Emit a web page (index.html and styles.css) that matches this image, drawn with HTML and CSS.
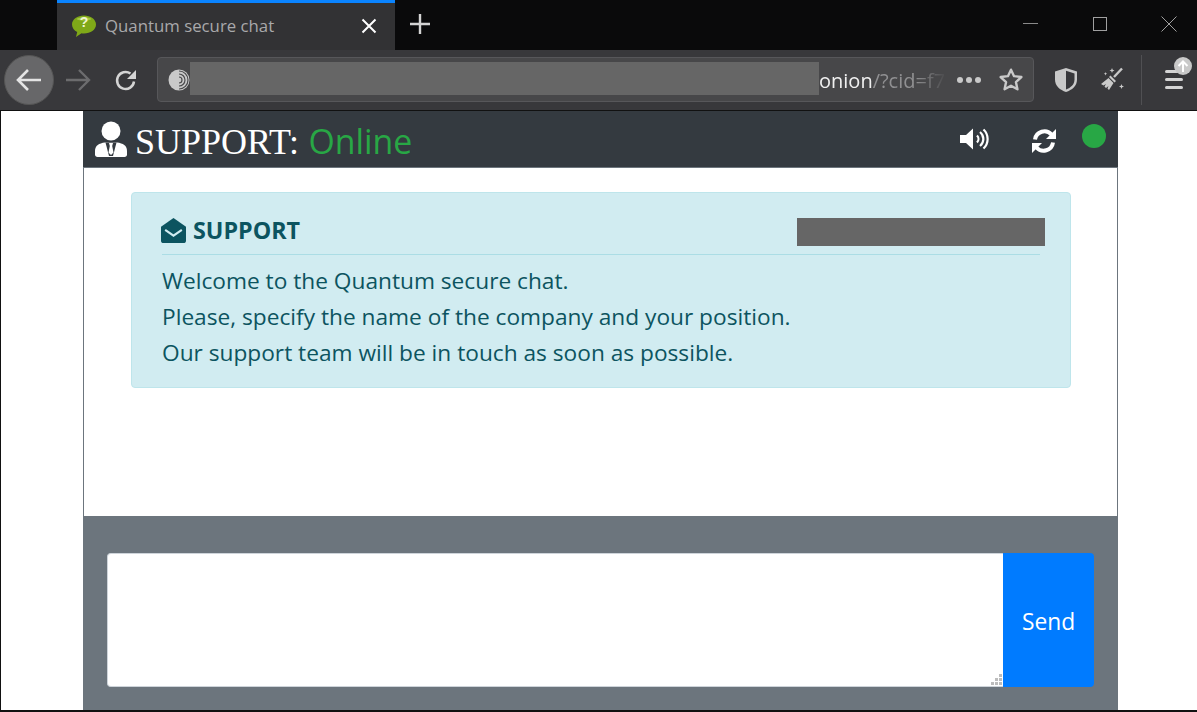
FILE: index.html
```html
<!DOCTYPE html>
<html lang="en">
<head>
<meta charset="utf-8">
<title>Quantum secure chat</title>
<link rel="stylesheet" href="styles.css">
</head>
<body>
<div class="window">
  <div class="tabstrip">
    <div class="tab">
      <svg class="favicon" viewBox="0 0 24 24" width="24" height="24"><path d="M12 .5c6.500 0 12 3.800 12 9s-5.500 9-12 9c-.9 0-1.700-.1-2.500-.2L4 22l1.200-5C2.200 15.500 0 12.800 0 9.500 0 4.300 5.500.5 12 .5z" fill="#7fa818"/><path d="M4.500 4c3-2.200 12-2.400 15 0-3 2-12 2-15 0z" fill="#a5c744"/></svg>
      <span class="favmark">?</span>
      <span class="tab-title">Quantum secure chat</span>
      <svg class="tab-close" viewBox="0 0 16 16" width="16" height="16"><path d="M1.500 1.500l13 13M14.500 1.500l-13 13" stroke="#fff" stroke-width="2" fill="none"/></svg>
    </div>
    <svg class="newtab" viewBox="0 0 22 22" width="22" height="22"><path d="M11 1v20M1 11h20" stroke="#d4d4d4" stroke-width="2.400" fill="none"/></svg>
    <div class="caption">
      <svg viewBox="0 0 16 16" width="16" height="16"><path d="M0 7.500h15" stroke="#8a8a8a" fill="none"/></svg>
      <svg viewBox="0 0 16 16" width="16" height="16"><rect x="1.500" y="1.500" width="13" height="13" stroke="#a0a0a0" fill="none"/></svg>
      <svg viewBox="0 0 16 16" width="16" height="16"><path d="M.5.500l15 15M15.500.500l-15 15" stroke="#a0a0a0" fill="none"/></svg>
    </div>
  </div>
  <div class="navbar">
    <div class="back">
      <svg viewBox="0 0 26 24" width="26" height="24"><path d="M2 12h23M12 2L2 12l10 10" stroke="#e4e4e4" stroke-width="2.600" fill="none"/></svg>
    </div>
    <svg class="forward" viewBox="0 0 26 24" width="26" height="24"><path d="M1 12h23M14 2l10 10-10 10" stroke="#6c6c6e" stroke-width="2.400" fill="none"/></svg>
    <svg class="reload" viewBox="0 0 24 24" width="24" height="24"><path d="M20 13.500A8.500 8.500 0 1 1 16.500 5.600" stroke="#d4d4d4" stroke-width="2.500" fill="none"/><path d="M22 2v9h-9z" fill="#d4d4d4"/></svg>
    <div class="urlbar">
      <svg class="onion" viewBox="0 0 22 22" width="22" height="22"><circle cx="11" cy="11" r="10.500" fill="#c9c9c9"/><path d="M11 2a9 9 0 0 1 0 18M11 5a6 6 0 0 1 0 12M11 8a3 3 0 0 1 0 6" stroke="#4a4a4c" stroke-width="1.200" fill="none"/></svg>
      <div class="redact-url"></div>
      <div class="url-clip"><span class="url-host">onion</span><span class="url-rest">/?cid=f7</span></div>
      <div class="dots"><i></i><i></i><i></i></div>
      <svg class="star" viewBox="1 1.500 22 22" width="24" height="24"><path d="M12 3l2.800 6 6.700.8-5 4.600 1.400 6.600-5.900-3.300L6.100 21l1.400-6.600-5-4.600 6.700-.8z" stroke="#c9c9c9" stroke-width="2.200" stroke-linejoin="round" fill="none"/></svg>
    </div>
    <svg class="shield" viewBox="0 0 24 26" width="24" height="26"><path d="M12 1l11 3.500v8C23 19 18 23 12 25 6 23 1 19 1 12.500v-8z" fill="#c9c9c9"/><path d="M12 3.800l8.500 2.700v6c0 5-3.800 8.200-8.500 10z" fill="#38383b"/></svg>
    <svg class="broom" viewBox="0 0 26 26" width="26" height="26"><path d="M23 1.500l-8 8.500" stroke="#c9c9c9" stroke-width="2.400" fill="none"/><path d="M11.500 8.500l5.500 5.500-1.500 1.500-5.500-5.500zM9.500 11l5 5-4.500 7-1.500-1.500 1-2.500-2.500 2-1.500-1.500 1.500-2.500-2.500 1.500L2 17z" fill="#c9c9c9"/><path d="M13 1l.7 1.800 1.800.7-1.800.7-.7 1.800-.7-1.800-1.800-.7 1.800-.7zM22.500 17l.7 1.800 1.800.7-1.800.7-.7 1.800-.7-1.800-1.800-.7 1.800-.7zM6.500 5l.5 1.200 1.200.5-1.200.5-.5 1.200-.5-1.200-1.200-.5 1.200-.5z" fill="#c9c9c9"/></svg>
    <div class="sep"></div>
    <div class="menu">
      <i></i><i></i><i></i>
      <svg class="update" viewBox="0 0 18 18" width="18" height="18"><circle cx="9" cy="9" r="9" fill="#c9c9c9"/><path d="M9 15V5M4.500 9L9 4.500 13.500 9" stroke="#fff" stroke-width="2" fill="none"/></svg>
    </div>
  </div>
  <div class="page">
    <div class="chat">
      <header class="chat-head">
        <svg class="agent" viewBox="0 0 32 36" width="32" height="36"><circle cx="16" cy="10" r="9.500" fill="#fff"/><path d="M10 21.500c-6 .8-10 3-10 8.500v3.500C0 35 1 36 2.500 36h27c1.500 0 2.500-1 2.500-2.500V30c0-5.500-4-7.700-10-8.500z" fill="#fff"/><path d="M10.500 21.500h11L18 35h-4z" fill="#343a40"/><path d="M14 22h4l-.8 3 1.300 6.500L16 34l-2.500-2.500 1.300-6.500z" fill="#fff"/></svg>
        <h1 class="title"><span class="title-label">SUPPORT:</span> <span class="title-status">Online</span></h1>
        <div class="head-tools">
          <svg class="sound" viewBox="0 0 30 24" width="30" height="24"><path d="M1 8h6l7-6.500v21L7 16H1z" fill="#fff"/><path d="M18 8.500a5 5 0 0 1 0 7M21 5a9 9 0 0 1 0 14M24.500 2.500a13 13 0 0 1 0 19" stroke="#fff" stroke-width="2.200" fill="none"/></svg>
          <svg class="refresh" viewBox="0 0 26 26" width="26" height="26"><path d="M4 11.500A9.500 9.500 0 0 1 20.500 6.500" stroke="#fff" stroke-width="4" fill="none"/><path d="M25 1v10H15z" fill="#fff"/><path d="M22 14.500A9.500 9.500 0 0 1 5.500 19.500" stroke="#fff" stroke-width="4" fill="none"/><path d="M1 25V15h10z" fill="#fff"/></svg>
          <span class="dot"></span>
        </div>
      </header>
      <main class="messages">
        <section class="alert">
          <div class="alert-head">
            <h2 class="alert-title">
              <svg viewBox="0 0 24 24" width="25" height="25"><path d="M12 0l12 8.500V21.500A2.500 2.500 0 0 1 21.500 24h-19A2.500 2.500 0 0 1 0 21.500V8.500z" fill="#0c5460"/><path d="M4 11.500l8 5.500 8-5.500" stroke="#d1ecf1" stroke-width="2" fill="none"/></svg>
              SUPPORT
            </h2>
            <div class="redact-date"></div>
          </div>
          <p>Welcome to the Quantum secure chat.</p>
          <p>Please, specify the name of the company and your position.</p>
          <p>Our support team will be in touch as soon as possible.</p>
        </section>
      </main>
      <footer class="composer">
        <div class="input-group">
          <textarea class="input" aria-label="Message"></textarea>
          <svg class="grip" viewBox="0 0 11 11" width="11" height="11"><path d="M8 0h3v3H8zM8 4h3v3H8zM8 8h3v3H8zM4 4h3v3H4zM4 8h3v3H4zM0 8h3v3H0z" fill="#bdbdbd"/></svg>
          <button class="send" type="button">Send</button>
        </div>
      </footer>
    </div>
  </div>
</div>
</body>
</html>
```
FILE: styles.css
```css
* { box-sizing: border-box; }
html, body { margin: 0; height: 100%; overflow: hidden; }
body { font-family: "Open Sans", "Noto Sans", sans-serif; background: #fff; }
.window { width: 1197px; height: 712px; display: flex; flex-direction: column; }

.tabstrip { height: 50px; background: #0a0a0b; display: flex; align-items: stretch; padding-left: 57px; flex: none; }
.tab { position: relative; width: 338px; background: #323234; border-top: 3px solid #0a84ff; display: flex; align-items: center; padding: 0 18px 2px 15px; }
.favicon { flex: none; margin-top: 2px; }
.favmark { position: absolute; left: 15px; top: 11px; width: 24px; text-align: center; font: bold 14px "Liberation Sans", sans-serif; color: #eef5cf; }
.tab-title { flex: 1; margin-left: 9px; font-size: 16.800px; color: #a9a9ab; white-space: nowrap; }
.tab-close { flex: none; }
.newtab { align-self: center; margin: 0 0 2px 14px; }
.caption { margin-left: auto; display: flex; align-items: center; gap: 53px; padding: 0 20px 2px 0; }

.navbar { height: 60px; background: #38383b; display: flex; align-items: center; flex: none; position: relative; }
.back { width: 50px; height: 50px; margin-left: 4px; border-radius: 50%; background: #676769; border: 1px solid #555; display: flex; align-items: center; justify-content: center; }
.forward { margin-left: 11px; }
.reload { margin-left: 23px; }
.urlbar { margin: 0 0 1px 19px; width: 877px; height: 45px; background: #474749; border: 1px solid #57575a; border-radius: 4px; display: flex; align-items: center; padding-left: 10px; position: relative; }
.onion { flex: none; }
.redact-url { width: 629px; height: 33px; background: #666; flex: none; margin: 0 0 2px 0; }
.url-clip { width: 128px; overflow: hidden; white-space: nowrap; font-size: 20px; flex: none; margin-top: 2px; -webkit-mask-image: linear-gradient(to right, #000 75%, transparent 100%); mask-image: linear-gradient(to right, #000 75%, transparent 100%); }
.url-host { color: #f0f0f0; }
.url-rest { color: #909092; }
.dots { display: flex; gap: 3px; margin-left: 10px; }
.dots i { width: 6px; height: 6px; border-radius: 50%; background: #c9c9c9; }
.star { margin-left: 18px; flex: none; }
.shield { margin-left: 20px; flex: none; }
.broom { margin-left: 21px; flex: none; }
.sep { width: 1px; height: 50px; background: #505053; margin-left: 16px; }
.menu { position: relative; margin-left: 23px; width: 18px; display: flex; flex-direction: column; gap: 5px; margin-top: -1px; }
.menu i { height: 3px; background: #d4d4d4; border-radius: 2px; }
.update { position: absolute; left: 9px; top: -13px; }

.page { flex: 1; min-height: 0; background: #fff; border-left: 1px solid #111; border-top: 1px solid #111; border-bottom: 2px solid #111; padding-left: 82px; }
.chat { width: 1035px; height: 100%; border: solid #6c757d; border-width: 0 1px; display: flex; flex-direction: column; }
.chat-head { height: 57px; margin: 0 -1px; background: #343a40; border-bottom: 1px solid #6c757d; display: flex; align-items: center; padding: 0 12px 0 12px; flex: none; }
.agent { flex: none; margin-top: -1px; }
.title { margin: 4px 0 0 8px; font-weight: 400; font-size: 36px; line-height: 1; white-space: nowrap; }
.title-label { font-family: "Liberation Serif", serif; color: #fff; }
.title-status { font-family: "Open Sans", sans-serif; font-size: 33.800px; color: #28a745; }
.head-tools { margin-left: auto; display: flex; align-items: center; }
.sound { margin-left: 2px; }
.refresh { margin: 3px 0 0 42px; }
.dot { width: 24px; height: 24px; border-radius: 50%; background: #28a745; margin: -7px 0 0 25px; }

.messages { flex: 1; min-height: 0; background: #fff; padding: 24px 46px 0 47px; }
.alert { height: 196px; background: #d1ecf1; border: 1px solid #bee5eb; border-radius: 4px; padding: 16px 30px 0; color: #0c5460; }
.alert-head { height: 46px; border-bottom: 1px solid #abdde5; display: flex; align-items: center; justify-content: space-between; margin-bottom: 8px; padding-bottom: 2px; }
.alert-title { margin: 0 0 0 -1px; display: flex; align-items: center; gap: 7px; font-size: 23.300px; font-weight: 700; line-height: 1; }
.redact-date { width: 248px; height: 28px; background: #666; margin-right: -5px; margin-top: 3px; }
.alert p { margin: 0; font-size: 22.700px; line-height: 36px; white-space: nowrap; }

.composer { height: 194px; background: #6c757d; padding: 37px 23px 0; flex: none; }
.input-group { display: flex; height: 134px; position: relative; }
.input { flex: 1; min-width: 0; height: 100%; border: 1px solid #ced4da; border-right: 0; border-radius: 4px 0 0 4px; background: #fff; margin: 0; padding: 6px 12px; font: inherit; resize: none; }
.grip { position: absolute; right: 92px; bottom: 2px; }
.send { width: 91px; height: 100%; border: 0; background: #007bff; color: #fff; border-radius: 0 4px 4px 0; font-family: inherit; font-size: 22.800px; padding: 2px 0 0; }
```
